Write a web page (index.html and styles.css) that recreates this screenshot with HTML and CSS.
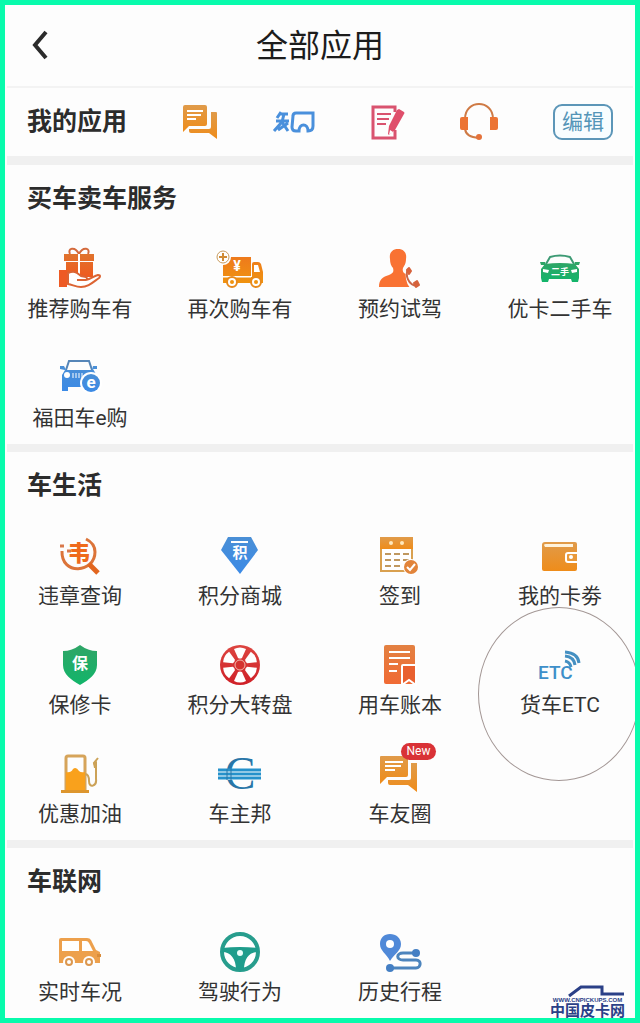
FILE: index.html
```html
<!DOCTYPE html>
<html lang="zh-CN">
<head>
    <meta charset="UTF-8">
    <meta name="viewport" content="width=device-width, initial-scale=1.0">
    <title>全部应用</title>
    <link rel="stylesheet" href="styles.css">
</head>
<body>

<!-- shared icon colours -->
<svg class="defs" aria-hidden="true">
    <defs>
        <linearGradient id="orange" x1="0" y1="0" x2="0" y2="1"><stop offset="0" stop-color="#e0732d"/><stop offset="1" stop-color="#ef5a1e"/></linearGradient>
        <linearGradient id="amber" x1="0" y1="0" x2="0" y2="1"><stop offset="0" stop-color="#e09b4a"/><stop offset="1" stop-color="#ef8c1a"/></linearGradient>
        <linearGradient id="truck" x1="0" y1="0" x2="0" y2="1"><stop offset="0" stop-color="#ee7a1c"/><stop offset="1" stop-color="#f0930f"/></linearGradient>
        <linearGradient id="blue" x1="0" y1="0" x2="0" y2="1"><stop offset="0" stop-color="#4a8fd6"/><stop offset="1" stop-color="#3b8ae6"/></linearGradient>
        <linearGradient id="green" x1="0" y1="0" x2="0" y2="1"><stop offset="0" stop-color="#2fa567"/><stop offset="1" stop-color="#12b56a"/></linearGradient>
        <linearGradient id="red" x1="0" y1="0" x2="0" y2="1"><stop offset="0" stop-color="#dd4540"/><stop offset="1" stop-color="#cf2027"/></linearGradient>
    </defs>
</svg>

<main class="frame">
    <header class="topbar">
        <button class="back" type="button" aria-label="返回">
            <svg width="20" height="30" viewBox="0 0 20 30"><path d="M17 1 6 14l11 13" fill="none" stroke="#2b2b2b" stroke-width="4"/></svg>
        </button>
        <h1>全部应用</h1>
    </header>

    <div class="mine">
        <h2>我的应用</h2>
        <a href="#" aria-label="车友圈">
            <svg width="36" height="36" viewBox="0 0 36 36" fill="url(#amber)">
                <path d="M3 1h20q2 0 2 2v17q0 2-2 2H7l-6 6V3q0-2 2-2z"/>
                <path d="M29 8h5q1 0 1 1v26l-8-6H9q-2 0-2-2v-2h20q2 0 2-2z"/>
                <path d="M5 7h16M5 11h14M5 15h9" stroke="#fff" stroke-width="2"/>
            </svg>
        </a>
        <a href="#" aria-label="知识">
            <svg width="42" height="24" viewBox="0 0 42 24" fill="none" stroke="#4a90dc" stroke-width="3">
                <path d="M8 2 4 8M6 4h9M3 11h13M11 4 9 12 1 21M9 12l6 9M5 20l10-7"/>
                <path d="M20 6q0-3 3-3h17v13q0 5-5 5c0-8-9-8-9 0h-3q-4 0-4-4z"/>
            </svg>
        </a>
        <a href="#" aria-label="报名">
            <svg width="34" height="36" viewBox="0 0 34 36" fill="none" stroke="#d9536f">
                <path d="M24 8V3H2v31h22v-8" stroke-width="3"/>
                <path d="M6 10h14M6 15h12M6 20h9" stroke-width="2"/>
                <path d="m28 5 5 3q1 1 0 2l-9 16-6 5-1-1 1-8 8-16z" fill="#df4f6b" stroke="none"/>
                <path d="m19 26 3 2-4 3z" fill="#fff" stroke="none"/>
            </svg>
        </a>
        <a href="#" aria-label="客服">
            <svg width="38" height="38" viewBox="0 0 38 38" fill="none" stroke="#cf7a45" stroke-width="2">
                <path d="M5 16C5-4 33-4 33 16M5 26c1 6 5 8 14 9"/>
                <path d="M2 14h6v13H2q-2 0-2-2v-9q0-2 2-2zM30 14h6q2 0 2 2v9q0 2-2 2h-6z" fill="#ec7434" stroke="none"/>
                <circle cx="19" cy="34" r="3" fill="#e5723a" stroke="none"/>
            </svg>
        </a>
        <button class="edit" type="button">编辑</button>
    </div>

    <section class="group">
        <h2>买车卖车服务</h2>
        <div class="apps">
            <a class="app" href="#">
                <svg class="icon" viewBox="0 0 44 44">
                    <path d="M21 7C17-1 9 1 12 7M21 7c4-8 12-6 9 0" fill="none" stroke="#d46a3c" stroke-width="2"/>
                    <path d="M6 7h30v7H6zM8 15h27v15H8z" fill="url(#orange)"/>
                    <path d="M21 7v21" stroke="#fff" stroke-width="2"/>
                    <path d="M1 23h8v17H1z" fill="#ee5a24"/>
                    <path d="M10 26c7-3 9 0 13 3l5 1q2 2 0 3c5-1 8-4 12-5 3 0 2 2 1 3-7 5-11 9-18 9-5 0-8-2-13-3z" fill="#fff" stroke="#dc6433" stroke-width="2"/>
                    <path d="M19 33h9" stroke="#dc6433" stroke-width="2"/>
                </svg>
                <span>推荐购车有</span>
            </a>
            <a class="app" href="#">
                <svg class="icon" viewBox="0 0 44 44">
                    <path d="M5 10h28v19H5zM5 30h29V17q0-2 2-2h4q2 0 3 2l2 8v11H5z" fill="url(#truck)"/>
                    <path d="M5 30h28" stroke="#fff"/>
                    <path d="M36 18h4l2 7h-6z" fill="#fff"/>
                    <text x="19" y="24" text-anchor="middle" font-size="14" font-weight="700" fill="#fff">¥</text>
                    <circle cx="14" cy="35" r="5" fill="#fff" stroke="#e88a1c" stroke-width="2"/><circle cx="14" cy="35" r="2" fill="#f0930f"/>
                    <circle cx="38" cy="35" r="5" fill="#fff" stroke="#e88a1c" stroke-width="2"/><circle cx="38" cy="35" r="2" fill="#f0930f"/>
                    <circle cx="5" cy="10" r="8" fill="#fff"/>
                    <circle cx="5" cy="10" r="6" fill="#fff" stroke="#c79a5c"/>
                    <path d="M1 10h8M5 6v8" stroke="#d08b35" stroke-width="2"/>
                </svg>
                <span>再次购车有</span>
            </a>
            <a class="app" href="#">
                <svg class="icon" viewBox="0 0 44 44">
                    <path d="M20 2c6 0 9 4 8 10 0 5-2 7-3 9-1 4 1 5 3 6l5 13H1c0-8 4-10 10-12 4-2 5-3 4-7-2-2-3-5-3-9-1-6 2-10 8-10z" fill="#f97233"/>
                    <path d="M28 19h12v22h-8q-6-7-4-22z" fill="#fdfdfd"/>
                    <path d="M30 22c-3 6 0 16 9 17" fill="none" stroke="#c9674a" stroke-width="2"/>
                    <path d="m29 23 2-2 2 3-2 3zM36 36l3-2 2 4-3 2z" fill="#d6623c" stroke="#d6623c" stroke-width="2" stroke-linejoin="round"/>
                </svg>
                <span>预约试驾</span>
            </a>
            <a class="app" href="#">
                <svg class="icon" viewBox="0 0 44 44">
                    <path d="M8 17 12 10q10-3 20 0l4 7" fill="none" stroke="#3d9a74" stroke-width="2"/>
                    <path d="M7 17q15-2 30 0l4 5v9l-1 4h-6l-1-3H11l-1 3H4l-1-4v-9z" fill="url(#green)"/>
                    <path d="M2 15h5l1 3H3zM37 15h5l-1 3h-5z" fill="#2fa567"/>
                    <path d="m5 22 6 1-1 3-5-1zM39 22l-6 1 1 3 5-1z" fill="#fff"/>
                    <text x="22" y="28" text-anchor="middle" font-size="9" font-weight="700" fill="#fff">二手</text>
                </svg>
                <span>优卡二手车</span>
            </a>
            <a class="app" href="#">
                <svg class="icon" viewBox="0 0 44 44">
                    <path d="m8 14 3-9h20l3 9" fill="none" stroke="#5686b8" stroke-width="2"/>
                    <path d="M2 10h4l2 4h26l1-4h4v3h-4l3 5v13H10v4H4V19l3-5-5-1z" fill="url(#blue)"/>
                    <circle cx="9" cy="19" r="3" fill="#fff"/>
                    <path d="M15 17v5M18 17v5M21 17v5M24 17v5" stroke="#fff"/>
                    <circle cx="33" cy="27" r="11" fill="#fff"/>
                    <circle cx="33" cy="27" r="9" fill="url(#blue)"/>
                    <text x="33" y="32" text-anchor="middle" font-size="17" font-weight="700" fill="#fff">e</text>
                </svg>
                <span>福田车e购</span>
            </a>
        </div>
    </section>

    <section class="group">
        <h2>车生活</h2>
        <div class="apps">
            <a class="app" href="#">
                <svg class="icon" viewBox="0 0 44 44">
                    <path d="M4 17c-1 25 33 22 33 1 0-5-3-10-9-13" fill="none" stroke="#dc7439" stroke-width="3"/>
                    <path d="m31 30 9 9" stroke="#e2661f" stroke-width="5"/>
                    <path d="M2 12h4M9 17h4" stroke="#d9794b" stroke-width="3"/>
                    <text x="21" y="27" text-anchor="middle" font-size="22" font-weight="900" fill="#ef6a1c">韦</text>
                </svg>
                <span>违章查询</span>
            </a>
            <a class="app" href="#">
                <svg class="icon" viewBox="0 0 44 44">
                    <path d="M10 3h23l7 13-18 24L3 16z" fill="url(#blue)"/>
                    <path d="M13 8h17" stroke="#fff" stroke-width="2"/>
                    <text x="22" y="24" text-anchor="middle" font-size="15" font-weight="700" fill="#fff">积</text>
                </svg>
                <span>积分商城</span>
            </a>
            <a class="app" href="#">
                <svg class="icon" viewBox="0 0 44 44">
                    <path d="M3 4h31v33H3z" fill="#fff" stroke="#d9a04f" stroke-width="2"/>
                    <path d="M2 3h33v12H2z" fill="url(#amber)"/>
                    <circle cx="13" cy="9" r="2" fill="#ffe9bd"/><circle cx="24" cy="9" r="2" fill="#ffe9bd"/>
                    <path d="M7 20h24M7 26h24M7 32h18" stroke="#c0985f" stroke-width="2" stroke-dasharray="6 3"/>
                    <circle cx="33" cy="33" r="8" fill="#fff"/>
                    <circle cx="33" cy="33" r="7" fill="#e2843a"/>
                    <path d="m29 33 3 3 5-6" fill="none" stroke="#fff" stroke-width="2"/>
                </svg>
                <span>签到</span>
            </a>
            <a class="app" href="#">
                <svg class="icon" viewBox="0 0 44 44">
                    <path d="M7 8h30q2 0 2 2v25q0 2-2 2H6q-2 0-2-2V11q0-3 3-3z" fill="url(#amber)"/>
                    <path d="M6 11q0-1 2-1h27v3H7z" fill="#fff3dc"/>
                    <path d="M39 19H30q-2 0-2 2v5q0 2 2 2h9" fill="#e99a3c" stroke="#fff" stroke-width="2"/>
                    <circle cx="33" cy="23" r="2" fill="#fff"/>
                </svg>
                <span>我的卡劵</span>
            </a>
            <a class="app" href="#">
                <svg class="icon" viewBox="0 0 44 44">
                    <path d="M22 2q8 6 17 6v14c0 9-8 15-17 20C13 37 5 31 5 22V8q9 0 17-6z" fill="url(#green)"/>
                    <text x="22" y="26" text-anchor="middle" font-size="16" font-weight="700" fill="#fff">保</text>
                </svg>
                <span>保修卡</span>
            </a>
            <a class="app" href="#">
                <svg class="icon" viewBox="0 0 44 44">
                    <circle cx="22" cy="22" r="20" fill="url(#red)"/>
                    <g fill="#fff">
                        <path id="slot" d="m20 15-4-9q6-3 12 0l-4 9q-2 1-4 0z"/>
                        <use href="#slot" transform="rotate(60 22 22)"/>
                        <use href="#slot" transform="rotate(120 22 22)"/>
                        <use href="#slot" transform="rotate(180 22 22)"/>
                        <use href="#slot" transform="rotate(240 22 22)"/>
                        <use href="#slot" transform="rotate(300 22 22)"/>
                    </g>
                    <circle cx="22" cy="22" r="5" fill="#d5322f" stroke="#f3b9ab"/>
                </svg>
                <span>积分大转盘</span>
            </a>
            <a class="app" href="#">
                <svg class="icon" viewBox="0 0 44 44">
                    <path d="M8 2h27q2 0 2 2v37H8q-2 0-2-2V4q0-2 2-2z" fill="url(#orange)" opacity=".9"/>
                    <path d="M11 9h21M11 15h21M11 21h9M11 28h8" stroke="#fff" stroke-width="2"/>
                    <path d="M24 42V23q0-1 1-1h13v20l-7-5z" fill="#e9602f" stroke="#fff" stroke-width="2"/>
                </svg>
                <span>用车账本</span>
            </a>
            <a class="app circled" href="#">
                <svg class="icon" viewBox="0 0 44 44">
                    <text x="0" y="36" font-size="19" font-weight="500" fill="#3e8fc9">ETC</text>
                    <path d="M27 18q5 1 6 6M27 13q9 1 10 9M27 9q13 1 14 11" fill="none" stroke="#4590c2" stroke-width="3"/>
                </svg>
                <span>货车ETC</span>
            </a>
            <a class="app" href="#">
                <svg class="icon" viewBox="0 0 44 44">
                    <path d="M8 40V6q0-2 2-2h15q2 0 2 2v34" fill="none" stroke="#d6a45a" stroke-width="3"/>
                    <path d="M8 20q5 1 7-3 3-3 6 2 2 2 6 1v19H8z" fill="#f9a11c"/>
                    <path d="M3 38h28v3H3z" fill="#dd962e"/>
                    <path d="M27 22q4 0 4 7c0 8 8 5 7-2V15l-2-4 4-5" fill="none" stroke="#cca257" stroke-width="2"/>
                    <path d="m35 11 4-2v7h-3z" fill="#cca257"/>
                </svg>
                <span>优惠加油</span>
            </a>
            <a class="app" href="#">
                <svg class="icon" viewBox="0 0 44 44">
                    <text class="serif" x="22" y="37" text-anchor="middle" font-size="46" fill="#2876a8">C</text>
                    <path d="M0 17h43v11H0z" fill="#fff"/>
                    <path d="M0 18h43M0 22h43M0 26h43" stroke="#2591cb" stroke-width="3"/>
                    <path d="M9 17v11M13 17v11" stroke="#2876a8"/>
                </svg>
                <span>车主邦</span>
            </a>
            <a class="app" href="#">
                <svg class="icon" viewBox="0 0 44 44" fill="url(#amber)">
                    <path d="M3 4h25q2 0 2 2v17q0 2-2 2H9l-7 7V5q0-1 1-1z"/>
                    <path d="M33 11h6v29l-9-7H12q-2 0-2-2v-3h21q2 0 2-2z"/>
                    <path d="M7 10h18M7 14h16M7 18h10" stroke="#fff" stroke-width="2"/>
                </svg>
                <em class="badge">New</em>
                <span>车友圈</span>
            </a>
        </div>
    </section>

    <section class="group">
        <h2>车联网</h2>
        <div class="apps">
            <a class="app" href="#">
                <svg class="icon" viewBox="0 0 44 44">
                    <path d="M3 8h26q3 0 4 2l5 10 4 2v11H1V10q0-2 2-2z" fill="#eda04c"/>
                    <path d="M4 11h17v10H4zM24 11h4q2 0 3 2l4 8H24z" fill="#fff"/>
                    <circle cx="11" cy="32" r="6" fill="#fff"/><circle cx="31" cy="32" r="6" fill="#fff"/>
                    <circle cx="11" cy="32" r="3" fill="#fff" stroke="#dc9850" stroke-width="2"/>
                    <circle cx="31" cy="32" r="3" fill="#fff" stroke="#dc9850" stroke-width="2"/>
                    <path d="M39 24h4v3h-4z" fill="#d98c3a"/>
                </svg>
                <span>实时车况</span>
            </a>
            <a class="app" href="#">
                <svg class="icon" viewBox="0 0 44 44">
                    <circle cx="22" cy="22" r="18" fill="#fff" stroke="#279d8d" stroke-width="4"/>
                    <path d="M4 18q18-2 36 0v4c-9 0-14 7-14 18h-8c0-11-5-18-14-18z" fill="#1f9d8c"/>
                    <circle cx="22" cy="23" r="3" fill="#e9fffb"/>
                </svg>
                <span>驾驶行为</span>
            </a>
            <a class="app" href="#">
                <svg class="icon" viewBox="0 0 44 44">
                    <path d="M12 4c6 0 11 4 11 10 0 7-6 9-11 17C8 23 2 21 2 14 2 8 6 4 12 4z" fill="#5089d8"/>
                    <circle cx="12" cy="14" r="4" fill="#fff"/>
                    <path d="M38 23H25c-7 0-7 7 0 7h13c6 0 5 8 0 8H12" fill="none" stroke="#4c84bd" stroke-width="3"/>
                    <circle cx="38" cy="23" r="4" fill="#447fc4"/><circle cx="12" cy="38" r="4" fill="#447fc4"/>
                </svg>
                <span>历史行程</span>
            </a>
        </div>
    </section>

    <div class="watermark">
        <svg width="74" height="12" viewBox="0 0 74 12"><path d="M19 11 31 2h21v7h22" fill="none" stroke="#2b4087" stroke-width="3"/></svg>
        <small>WWW.CNPICKUPS.COM</small>
        <strong>中国皮卡网</strong>
    </div>
</main>

</body>
</html>
```

FILE: styles.css
```css
* {
    box-sizing: border-box;
}
body {
    margin: 0;
    font-family: Roboto, "Noto Sans CJK SC", sans-serif;
    color: #333;
    background: #fdfdfd;
}
h1, h2 {
    margin: 0;
}
a {
    color: inherit;
    text-decoration: none;
}
svg {
    display: block;
    overflow: visible;
}
.defs {
    position: absolute;
    width: 0;
    height: 0;
}

.frame {
    position: relative;
    min-height: 100vh;
    padding: 0 2px;
    border: 5px solid #08fbac;
    overflow: hidden;
}

/* title bar */
.topbar {
    display: grid;
    grid-template-columns: 60px 1fr 60px;
    align-items: center;
    height: 83px;
    border-bottom: 2px solid #f3f3f3;
}
.topbar h1 {
    font-size: 32px;
    font-weight: 400;
    line-height: 40px;
    text-align: center;
    color: #1c1c1c;
}
.back {
    width: 60px;
    padding: 0 0 0 22px;
    border: none;
    background: none;
    cursor: pointer;
}

/* pinned apps */
.mine {
    display: flex;
    align-items: center;
    justify-content: space-between;
    height: 77px;
    padding: 0 20px;
    border-bottom: 9px solid #f0f0f0;
}
h2 {
    font-size: 25px;
    font-weight: 700;
    line-height: 34px;
    color: #2c2c2c;
}
.edit {
    width: 60px;
    height: 36px;
    padding: 0;
    border: 2px solid #5c96b8;
    border-radius: 9px;
    background: #f8fdff;
    color: #5495b8;
    font-family: inherit;
    font-size: 21px;
    line-height: 32px;
    cursor: pointer;
}

/* app groups */
.group {
    padding: 17px 0 11px;
}
.group + .group {
    border-top: 8px solid #f0f0f0;
}
.group h2 {
    padding-left: 20px;
}
.apps {
    display: grid;
    grid-template-columns: repeat(4, 1fr);
    margin: -1px -7px 0;
}
.app {
    position: relative;
    display: flex;
    flex-direction: column;
    align-items: center;
    gap: 4px;
    padding-top: 32px;
    font-size: 21px;
    line-height: 29px;
    white-space: nowrap;
}
.icon {
    width: 44px;
    height: 44px;
}
.serif {
    font-family: "Liberation Serif", serif;
}
.badge {
    position: absolute;
    top: 23px;
    left: calc(50% + 1px);
    width: 35px;
    height: 17px;
    border-radius: 9px;
    background: #d93237;
    color: #fff;
    font-size: 12px;
    font-style: normal;
    line-height: 17px;
    text-align: center;
}
.circled::after {
    content: "";
    position: absolute;
    top: -4px;
    left: calc(50% - 82px);
    width: 160px;
    height: 172px;
    border: 1px solid #a39795;
    border-radius: 50%;
}

/* site mark */
.watermark {
    position: absolute;
    right: 10px;
    bottom: 0;
    display: flex;
    flex-direction: column;
    align-items: center;
    color: #2b4087;
}
.watermark small {
    font-family: "Liberation Sans", sans-serif;
    font-size: 6px;
    font-weight: 700;
    line-height: 7px;
}
.watermark strong {
    font-size: 15px;
    line-height: 14px;
}
```
